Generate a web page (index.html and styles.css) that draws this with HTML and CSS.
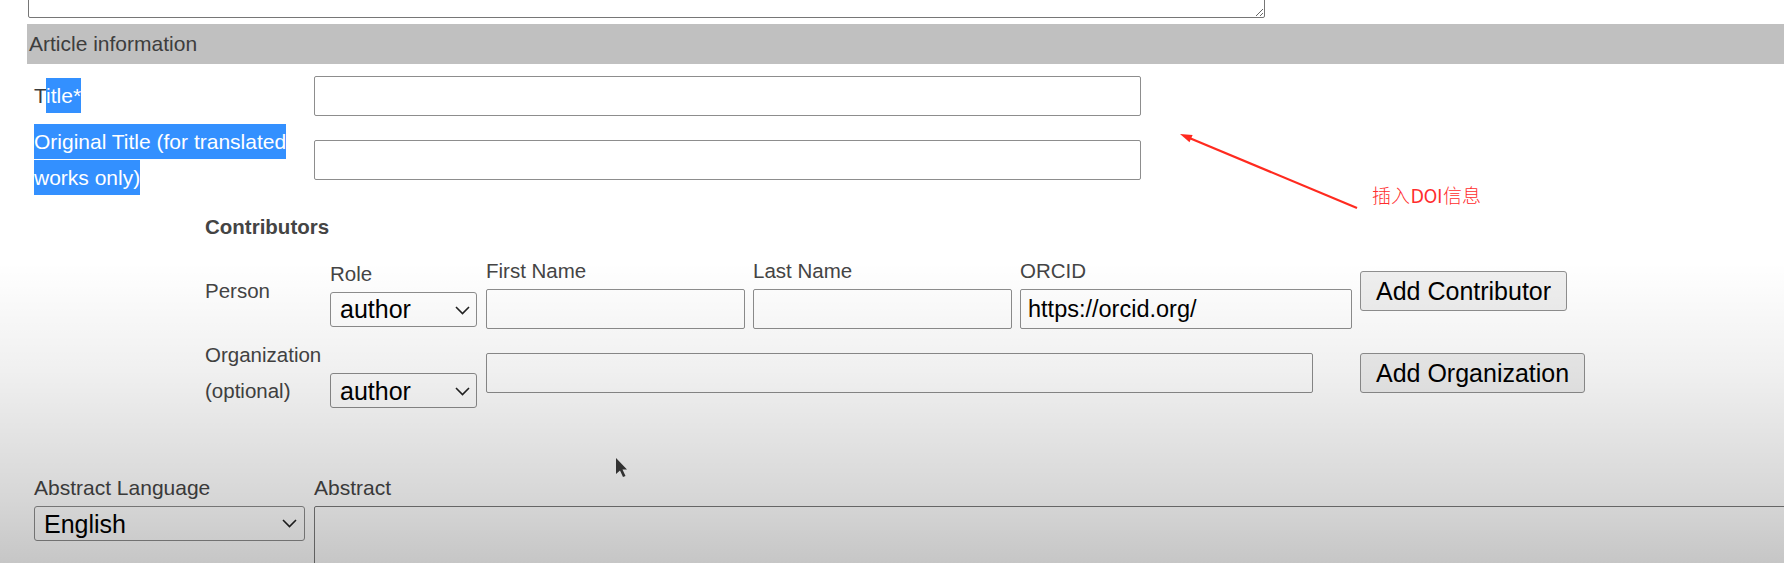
FILE: index.html
```html
<!DOCTYPE html>
<html lang="en">
<head>
<meta charset="UTF-8" />
<title>Article information</title>
<link rel="stylesheet" href="styles.css">
</head>
<body>
  <div class="page">
    <textarea class="prev-text"></textarea>

    <!-- Article information -->
    <div class="section-bar">Article information</div>
    <div class="title-grid">
      <label class="row-label">T<span class="sel">itle*</span></label>
      <input type="text" class="text-field" />
      <label class="row-label"><span class="sel">Original Title (for translated works only)</span></label>
      <input type="text" class="text-field" />
    </div>

    <!-- Contributors -->
    <div class="contributors">
      <h3>Contributors</h3>
      <div class="contrib-row">
        <div class="kind kind-person">Person</div>
        <div class="cell role">
          <label>Role</label>
          <span class="pick-wrap">
            <select class="pick"><option>author</option></select>
            <svg class="chev" width="15" height="9" viewBox="0 0 15 9"><polyline points="1,1 7.5,7.5 14,1" /></svg>
          </span>
        </div>
        <div class="cell name">
          <label>First Name</label>
          <input type="text" class="text-field" />
        </div>
        <div class="cell name">
          <label>Last Name</label>
          <input type="text" class="text-field" />
        </div>
        <div class="cell orcid">
          <label>ORCID</label>
          <input type="text" class="text-field" value="https://orcid.org/" />
        </div>
        <button class="btn btn-person">Add Contributor</button>
      </div>
      <div class="contrib-row org-row">
        <div class="kind">Organization<br>(optional)</div>
        <div class="cell role role-org">
          <span class="pick-wrap">
            <select class="pick"><option>author</option></select>
            <svg class="chev" width="15" height="9" viewBox="0 0 15 9"><polyline points="1,1 7.5,7.5 14,1" /></svg>
          </span>
        </div>
        <input type="text" class="text-field org-name" />
        <button class="btn">Add Organization</button>
      </div>
    </div>

    <!-- Abstract -->
    <div class="abstract-grid">
      <label>Abstract Language</label>
      <label>Abstract</label>
      <span class="pick-wrap">
        <select class="pick lang"><option>English</option></select>
        <svg class="chev chev-lang" width="15" height="9" viewBox="0 0 15 9"><polyline points="1,1 7.5,7.5 14,1" /></svg>
      </span>
      <textarea class="abstract-text"></textarea>
    </div>
  </div>

  <!-- annotation on top of the screenshot -->
  <svg class="note-arrow" width="200" height="95" viewBox="0 0 200 95">
    <line x1="187" y1="83" x2="20" y2="13.2" stroke="#ff2a1f" stroke-width="2.2" />
    <polygon points="10,9 22.6,9.9 19.5,17.3" fill="#ff2a1f" />
  </svg>
  <div class="note-text">插入<span class="latin">DOI</span>信息</div>

  <svg class="pointer" width="14" height="22" viewBox="0 0 14 22">
    <polygon points="1,1 1,17 5,13.5 8,20 10.5,19 7.5,12.5 12,12.5" fill="#3a3a3a" />
  </svg>

  <div class="dim"></div>
</body>
</html>
```

FILE: styles.css
```css
/* ---------- Base ---------- */
* { box-sizing: border-box; }
html, body { margin: 0; overflow: hidden; }
body {
  position: relative;
  width: 1784px;
  height: 563px;
  background: #fff;
  color: #444;
  font-family: "Liberation Sans", Arial, sans-serif;
}
.page { padding-left: 27px; }

/* ---------- Form controls ---------- */
.text-field {
  height: 40px;
  padding: 0 7px;
  border: 1px solid #8d8d8d;
  border-radius: 2px;
  background: #fff;
  color: #000;
  font-family: inherit;
  font-size: 23.5px;
}
.pick-wrap { position: relative; display: inline-block; line-height: 0; }
.pick {
  -webkit-appearance: none;
  appearance: none;
  height: 35px;
  padding: 0 30px 0 9px;
  border: 1px solid #8d8d8d;
  border-radius: 3px;
  background: #fff;
  color: #000;
  font-family: inherit;
  font-size: 25px;
}
.chev {
  position: absolute;
  right: 8px;
  top: 14px;
  fill: none;
  stroke: #222;
  stroke-width: 1.6;
  pointer-events: none;
}
.chev-lang { top: 13px; right: 8px; }
.btn {
  height: 40px;
  padding: 0 15px;
  border: 1px solid #8f8f8f;
  border-radius: 3px;
  background: #efefef;
  color: #000;
  font-family: inherit;
  font-size: 25px;
}

/* ---------- Top ---------- */
.prev-text {
  display: block;
  width: 1237px;
  height: 50px;
  margin: -32px 0 0 1px;
  border: 1px solid #767676;
  border-radius: 2px;
}
.section-bar {
  height: 40px;
  margin-top: 6px;
  padding-left: 2px;
  line-height: 40px;
  font-size: 21px;
  background: #c0c0c0;
  color: #3d3d3d;
}

/* ---------- Title rows ---------- */
.title-grid {
  display: grid;
  grid-template-columns: 287px 827px;
  row-gap: 8px;
  align-items: center;
  margin-top: 12px;
}
.row-label {
  padding: 0 10px 0 7px;
  font-size: 21px;
  line-height: 36px;
  color: #3c3c3c;
}
.sel { padding: 6px 0; background: #3390ff; color: #fff; }

/* ---------- Contributors ---------- */
.contributors { margin: 19px 0 0 178px; }
.contributors h3 {
  margin: 0;
  font-size: 20.5px;
  line-height: 24px;
  color: #444;
}
.contrib-row {
  display: flex;
  align-items: center;
  gap: 8px;
  margin-top: 22px;
  font-size: 20.5px;
}
.contrib-row.org-row { margin-top: 8px; }
.kind { width: 117px; line-height: 36px; white-space: nowrap; }
.kind-person, .btn-person { margin-bottom: 8px; }
.cell { display: flex; flex-direction: column; }
.cell label { line-height: 20px; margin-bottom: 8px; }
.cell.role { width: 148px; }
.cell.role .pick { width: 147px; }
.cell.name { width: 259px; }
.cell.orcid { width: 332px; }
.role-org { align-self: flex-end; margin-bottom: 1px; }
.org-name { width: 827px; margin-right: 39px; }

/* ---------- Abstract ---------- */
.abstract-grid {
  display: grid;
  grid-template-columns: 271px 1fr;
  column-gap: 9px;
  row-gap: 6px;
  margin: 67px 0 0 7px;
  font-size: 21px;
  line-height: 24px;
}
.lang { width: 271px; }
.abstract-text {
  width: calc(100% + 20px);
  height: 90px;
  border: 1px solid #7a7a7a;
  border-radius: 2px;
  resize: none;
}

/* ---------- Overlays ---------- */
.note-arrow { position: absolute; left: 1170px; top: 125px; }
.note-text {
  position: absolute;
  left: 1372px;
  top: 185px;
  font-family: "Noto Sans CJK SC", sans-serif;
  font-size: 19px;
  font-weight: 300;
  line-height: 19px;
  color: #ff2d2d;
}
.note-text .latin {
  display: inline-block;
  width: 33px;
  font-family: "Liberation Sans Narrow", "DejaVu Sans Condensed", sans-serif;
  font-weight: 400;
  text-align: center;
}
.pointer { position: absolute; left: 615px; top: 457px; }
.dim {
  position: absolute;
  inset: 0;
  pointer-events: none;
  background: linear-gradient(180deg, rgba(0,0,0,0) 262px, rgba(0,0,0,0.06) 370px, rgba(0,0,0,0.16) 500px, rgba(0,0,0,0.225) 563px);
}
```
